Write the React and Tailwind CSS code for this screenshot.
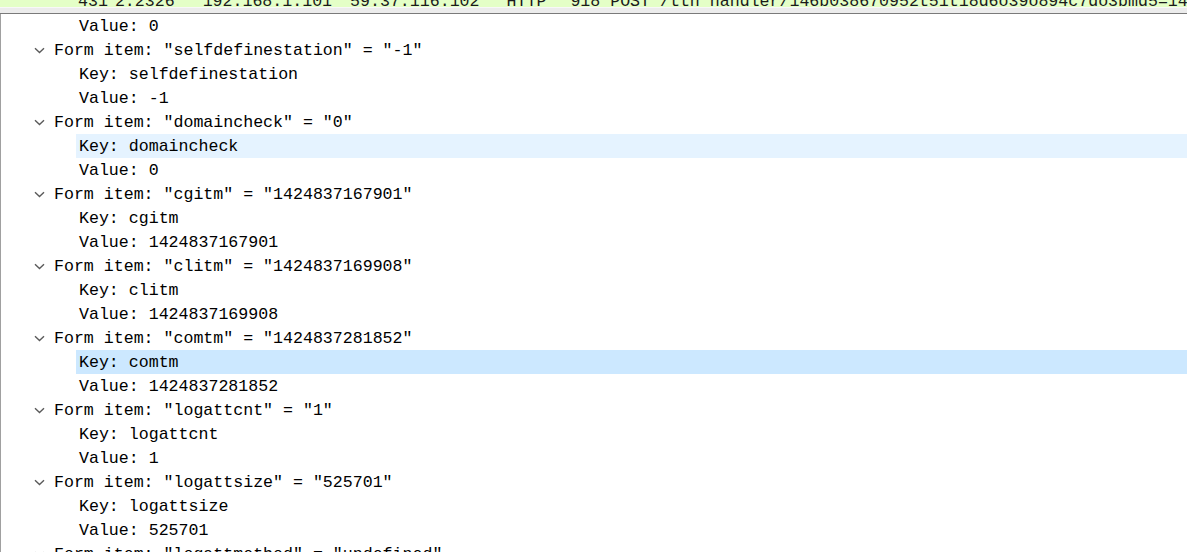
import React from "react";

const Chevron = () => (
  <svg width="11" height="7" viewBox="0 0 11 7" className="shrink-0">
    <path d="M1 1.2 L5.5 5.5 L10 1.2" fill="none" stroke="#5a5a5a" strokeWidth="1.4" />
  </svg>
);

const rows = [
  { l: 1, t: "Value: 0" },
  { l: 0, t: 'Form item: "selfdefinestation" = "-1"' },
  { l: 1, t: "Key: selfdefinestation" },
  { l: 1, t: "Value: -1" },
  { l: 0, t: 'Form item: "domaincheck" = "0"' },
  { l: 1, t: "Key: domaincheck", h: "hover" },
  { l: 1, t: "Value: 0" },
  { l: 0, t: 'Form item: "cgitm" = "1424837167901"' },
  { l: 1, t: "Key: cgitm" },
  { l: 1, t: "Value: 1424837167901" },
  { l: 0, t: 'Form item: "clitm" = "1424837169908"' },
  { l: 1, t: "Key: clitm" },
  { l: 1, t: "Value: 1424837169908" },
  { l: 0, t: 'Form item: "comtm" = "1424837281852"' },
  { l: 1, t: "Key: comtm", h: "sel" },
  { l: 1, t: "Value: 1424837281852" },
  { l: 0, t: 'Form item: "logattcnt" = "1"' },
  { l: 1, t: "Key: logattcnt" },
  { l: 1, t: "Value: 1" },
  { l: 0, t: 'Form item: "logattsize" = "525701"' },
  { l: 1, t: "Key: logattsize" },
  { l: 1, t: "Value: 525701" },
  { l: 0, t: 'Form item: "logattmethod" = "undefined"' },
];

export default function App() {
  const mono = { fontFamily: '"Liberation Mono", "DejaVu Sans Mono", monospace' };
  return (
    <div className="w-[1187px] h-[552px] overflow-hidden bg-white text-black text-[16.6px]" style={mono}>
      <div className="h-[7px] bg-[#e4ffc7] overflow-hidden">
        <div className="h-[24px] leading-[24px] mt-[-10px] whitespace-pre text-[#1a1a1a] flex">
          <span className="ml-[78px]">431</span>
          <span className="ml-[7px]">2.2326</span>
          <span className="ml-[28px]">192.168.1.101</span>
          <span className="ml-[18px]">59.37.116.102</span>
          <span className="ml-[27px]">HTTP</span>
          <span className="ml-[24px]">918 POST /ttn_handler/146b038670952t51t18d6o39o894c7do3bmd5=14</span>
        </div>
      </div>
      <div className="h-px bg-[#f8f8f8]" />
      <div className="h-[5px] bg-[#ececec]" />
      <div className="h-px bg-[#7a7a7a]" />
      <div className="border-l border-[#a0a0a0] flex flex-col">
        {rows.map((r, i) =>
          r.l === 0 ? (
            <div key={i} className="h-[24px] flex items-center pl-[33px] whitespace-pre shrink-0">
              <Chevron />
              <span className="ml-[9px] pt-[2px]">{r.t}</span>
            </div>
          ) : (
            <div key={i} className="h-[24px] flex items-stretch pl-[75px] whitespace-pre shrink-0">
              <div
                className={
                  "flex-1 flex items-center pl-[3px] pt-[2px] " +
                  (r.h === "hover" ? "bg-[#e5f3ff]" : r.h === "sel" ? "bg-[#cce8ff]" : "")
                }
              >
                {r.t}
              </div>
            </div>
          )
        )}
      </div>
    </div>
  );
}
